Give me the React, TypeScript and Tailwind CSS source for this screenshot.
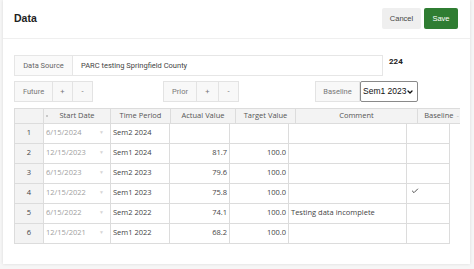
import { ChevronDown, Check } from "lucide-react";

const rows = [
  { n: 1, start: "6/15/2024", period: "Sem2 2024", actual: "", target: "", comment: "", base: false },
  { n: 2, start: "12/15/2023", period: "Sem1 2024", actual: "81.7", target: "100.0", comment: "", base: false },
  { n: 3, start: "6/15/2023", period: "Sem2 2023", actual: "79.6", target: "100.0", comment: "", base: false },
  { n: 4, start: "12/15/2022", period: "Sem1 2023", actual: "75.8", target: "100.0", comment: "", base: true },
  { n: 5, start: "6/15/2022", period: "Sem2 2022", actual: "74.1", target: "100.0", comment: "Testing data incomplete", base: false },
  { n: 6, start: "12/15/2021", period: "Sem1 2022", actual: "68.2", target: "100.0", comment: "", base: false },
];

function Btn({ children, className = "" }: { children: React.ReactNode; className?: string }) {
  return (
    <div
      className={`h-[21px] flex items-center justify-center border border-[#e3e3e3] bg-[#f8f8f8] text-[7.5px] text-[#777] ${className}`}
    >
      {children}
    </div>
  );
}

export default function App() {
  return (
    <div className="w-[474px] h-[269px] bg-[#f6f6f6] overflow-hidden font-['Roboto',sans-serif]">
      <div className="ml-[3px] w-[467px] h-[264px] bg-white shadow-[0_0_3px_rgba(0,0,0,0.12)] flex flex-col">
        {/* Header */}
        <div className="h-[39px] border-b border-[#efefef] flex items-center pl-[11px] pr-[12px]">
          <span className="text-[10.5px] font-bold text-[#222] font-['Liberation_Sans',sans-serif] -mt-[1px]">Data</span>
          <div className="ml-auto flex gap-[3px] -mt-[1px]">
            <div className="w-[39px] h-[21px] rounded-[2px] bg-[#efefef] flex items-center justify-center text-[7.5px] text-[#444] font-['Liberation_Sans',sans-serif]">
              Cancel
            </div>
            <div className="w-[34px] h-[21px] rounded-[2px] bg-[#2f7d32] flex items-center justify-center text-[7.5px] text-white font-['Liberation_Sans',sans-serif]">
              Save
            </div>
          </div>
        </div>

        <div className="pl-[11px] pt-[16px]">
          {/* Data source */}
          <div className="flex items-center">
            <div className="w-[369px] h-[21px] border border-[#e6e6e6] flex items-center text-[7.5px] text-[#444]">
              <div className="w-[58px] h-full bg-[#fafafa] border-r border-[#e6e6e6] flex items-center justify-center text-[#666]">
                Data Source
              </div>
              <span className="pl-[8px]">PARC testing Springfield County</span>
            </div>
            <span className="ml-[6px] -mt-[7px] text-[8px] font-bold text-[#222]">224</span>
          </div>

          {/* Controls */}
          <div className="flex items-center mt-[5px]">
            <Btn className="w-[39px]">Future</Btn>
            <Btn className="w-[20px] border-l-0">+</Btn>
            <Btn className="w-[20px] border-l-0">-</Btn>
            <Btn className="w-[34px] ml-[70px]">Prior</Btn>
            <Btn className="w-[22px] border-l-0">+</Btn>
            <Btn className="w-[20px] border-l-0">-</Btn>
            <Btn className="w-[45px] ml-[76px]">Baseline</Btn>
            <div className="w-[58px] h-[21px] border border-[#8a8a8a] rounded-[2px] flex items-center pl-[2px] pr-[3px] text-[8.5px] text-[#111] whitespace-nowrap font-['Liberation_Sans',sans-serif]">
              Sem1 2023
              <ChevronDown className="ml-auto w-[8px] h-[8px] shrink-0" strokeWidth={4} />
            </div>
          </div>

          {/* Table */}
          <div className="mt-[6px] font-['Open_Sans',sans-serif] text-[7.5px] text-[#444]">
            <div className="grid grid-cols-[29px_67px_60px_65px_60px_122px_42px] h-[16px] w-fit bg-[#f3f3f3] border-t border-l border-[#dcdcdc]">
              <div className="border-r border-b border-[#dcdcdc]" />
              <div className="border-r border-b border-[#dcdcdc] relative flex items-center justify-center text-[#555]">
                <span className="absolute left-[2px] top-[6px] w-[2px] h-[2px] bg-[#c8c8c8]" />
                Start Date
              </div>
              <div className="border-r border-b border-[#dcdcdc] flex items-center justify-center text-[#555]">Time Period</div>
              <div className="border-r border-b border-[#dcdcdc] flex items-center justify-center text-[#555]">Actual Value</div>
              <div className="border-r border-b border-[#dcdcdc] flex items-center justify-center text-[#555]">Target Value</div>
              <div className="border-r border-b border-[#dcdcdc] flex items-center justify-center text-[#555]">Comment</div>
              <div className="border-b border-[#dcdcdc] flex items-center justify-end pr-[1px] text-[#555]">
                Baseline <span className="ml-[3px] text-[#bbb]">-</span>
              </div>
            </div>
            <div className="w-fit border-l border-[#dcdcdc]">
              {rows.map((r) => (
                <div key={r.n} className="grid grid-cols-[29px_67px_59px_60px_59px_118px_43px] h-[20px] leading-[10px]">
                  <div className="bg-[#f3f3f3] border-r border-b border-[#dcdcdc] flex justify-center pt-[3px]">{r.n}</div>
                  <div className="border-r border-b border-[#dcdcdc] flex pl-[2px] pr-[6px] pt-[3px] text-[#a0a0a0]">
                    {r.start}
                    <span className="ml-auto text-[#d6d6d6] text-[5px]">▼</span>
                  </div>
                  <div className="border-r border-b border-[#dcdcdc] pl-[2px] pt-[3px]">{r.period}</div>
                  <div className="border-r border-b border-[#dcdcdc] text-right pr-[2px] pt-[3px]">{r.actual}</div>
                  <div className="border-r border-b border-[#dcdcdc] text-right pr-[2px] pt-[3px]">{r.target}</div>
                  <div className="border-r border-b border-[#dcdcdc] pl-[2px] pt-[3px] whitespace-nowrap">{r.comment}</div>
                  <div className="border-r border-b border-[#dcdcdc] pl-[4px] pt-[3px]">
                    {r.base && <Check className="w-[8px] h-[8px] text-[#333]" strokeWidth={2.5} />}
                  </div>
                </div>
              ))}
            </div>
          </div>
        </div>
      </div>
    </div>
  );
}
